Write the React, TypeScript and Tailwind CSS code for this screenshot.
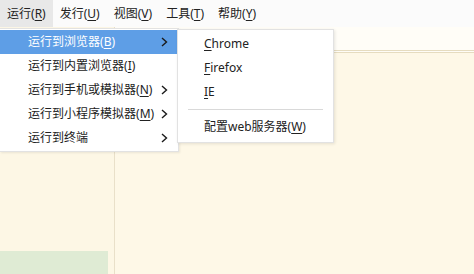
import React from "react";

const Chevron = () => (
  <svg width="7" height="10" viewBox="0 0 7 10" className="shrink-0">
    <polyline points="1,1 5.5,5 1,9" fill="none" stroke="#1a1a1a" strokeWidth="1.4" />
  </svg>
);

const U = ({ c }: { c: string }) => <span className="underline underline-offset-2">{c}</span>;

export default function App() {
  const font = { fontFamily: '"Noto Sans", "Noto Sans CJK SC", sans-serif' };
  const menus: [string, string][] = [
    ["运行", "R"],
    ["发行", "U"],
    ["视图", "V"],
    ["工具", "T"],
    ["帮助", "Y"],
  ];
  const items: { label: string; key?: string; arrow: boolean; active?: boolean }[] = [
    { label: "运行到浏览器", key: "B", arrow: true, active: true },
    { label: "运行到内置浏览器", key: "I", arrow: false },
    { label: "运行到手机或模拟器", key: "N", arrow: true },
    { label: "运行到小程序模拟器", key: "M", arrow: true },
    { label: "运行到终端", arrow: true },
  ];
  return (
    <div className="relative w-[474px] h-[274px] overflow-hidden text-[12px] text-[#222] bg-[#fef8e7]" style={font}>
      {/* menu bar */}
      <div className="flex h-[27px] items-center bg-[#fbfbfb]">
        {menus.map(([t, k], i) => (
          <div
            key={t}
            className={`h-full flex items-center px-[7px] ${i === 0 ? "bg-[#e8e8e8]" : ""}`}
          >
            {t}(<U c={k} />)
          </div>
        ))}
      </div>
      {/* body */}
      <div className="flex h-[247px]">
        <div className="w-[115px] flex flex-col justify-end bg-[#fdf7e5] border-r border-[#e9e0c9]">
          <div className="h-[23px] w-[108px] bg-[#dfebd4]" />
        </div>
        <div className="flex-1 flex flex-col">
          <div className="h-[26px] bg-[#fffdf7] border-b-[3px] border-double border-[#e6dcc0]" />
          <div className="flex-1 bg-[#fef8e7]" />
        </div>
      </div>

      {/* dropdown */}
      <div className="absolute left-0 top-[28px] w-[179px] h-[124px] bg-white border border-l-0 border-[#e2e2e2] shadow-[1px_1px_2px_rgba(0,0,0,0.08)] pt-[1px]">
        {items.map((it) => (
          <div
            key={it.label}
            className={`h-[24px] flex items-center pl-[28px] pr-[9px] w-[177px] ${
              it.active ? "bg-[#5e9ee6] text-white" : ""
            }`}
          >
            <span className="flex-1">
              {it.label}
              {it.key ? (
                <>
                  (<U c={it.key} />)
                </>
              ) : null}
            </span>
            {it.arrow ? <Chevron /> : null}
          </div>
        ))}
      </div>

      {/* submenu */}
      <div className="absolute left-[177px] top-[29px] w-[157px] h-[114px] bg-white border border-[#e2e2e2] shadow-[1px_1px_3px_rgba(0,0,0,0.1)] pt-[2px]">
        <div className="h-[24px] flex items-center pl-[26px]">
          <U c="C" />hrome
        </div>
        <div className="h-[24px] flex items-center pl-[26px]">
          <U c="F" />irefox
        </div>
        <div className="h-[24px] flex items-center pl-[26px]">
          <U c="I" />E
        </div>
        <div className="h-[11px] flex items-center px-[10px]">
          <div className="h-px w-full bg-[#d9d9d9]" />
        </div>
        <div className="h-[24px] flex items-center pl-[26px]">
          配置web服务器(<U c="W" />)
        </div>
      </div>
    </div>
  );
}
